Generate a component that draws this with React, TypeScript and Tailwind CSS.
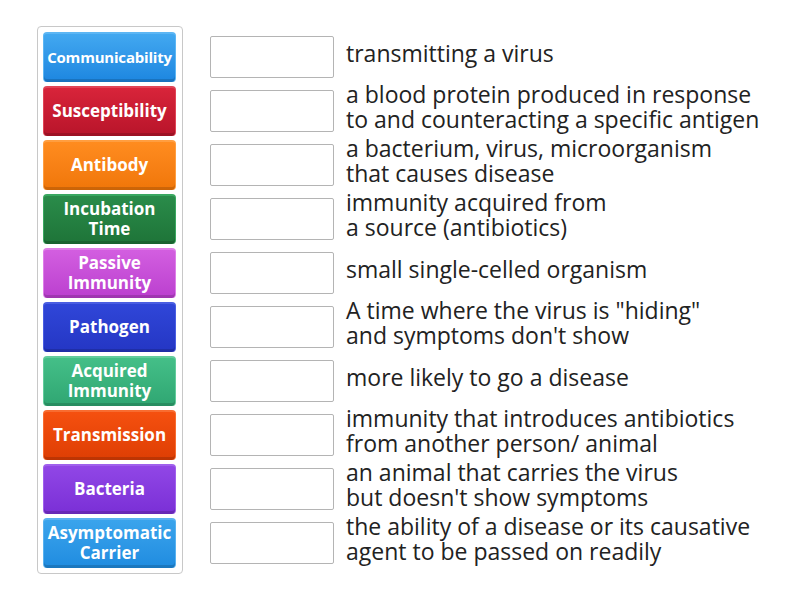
import React from "react";

const tiles: { label: string[]; cls: string }[] = [
  { label: ["Communicability"], cls: "from-[#42a8f0] to-[#1c86e0] border-[#5cb6f4] text-[15px] tracking-[-0.2px]" },
  { label: ["Susceptibility"], cls: "from-[#d8243a] to-[#b8142a] border-[#e04456] text-[17px]" },
  { label: ["Antibody"], cls: "from-[#ff8c1f] to-[#f07608] border-[#ff9e40] text-[17px]" },
  { label: ["Incubation", "Time"], cls: "from-[#2a8c4a] to-[#1e7438] border-[#3aa860] text-[17px]" },
  { label: ["Passive", "Immunity"], cls: "from-[#d35ee0] to-[#bb3fcf] border-[#de7ee8] text-[17px]" },
  { label: ["Pathogen"], cls: "from-[#3046d8] to-[#2436c4] border-[#4a5ee2] text-[17px]" },
  { label: ["Acquired", "Immunity"], cls: "from-[#44bf88] to-[#2fa672] border-[#62cc9c] text-[17px]" },
  { label: ["Transmission"], cls: "from-[#f5500f] to-[#de3e04] border-[#f86c30] text-[17px]" },
  { label: ["Bacteria"], cls: "from-[#9146e6] to-[#7a2fd6] border-[#a060ec] text-[17px]" },
  { label: ["Asymptomatic", "Carrier"], cls: "from-[#3aa4ec] to-[#1f8ce0] border-[#58b2f0] text-[17px]" },
];

const answers: string[][] = [
  ["transmitting a virus"],
  ["a blood protein produced in response", "to and counteracting a specific antigen"],
  ["a bacterium, virus, microorganism", "that causes disease"],
  ["immunity acquired from", "a source (antibiotics)"],
  ["small single-celled organism"],
  ['A time where the virus is "hiding"', "and symptoms don't show"],
  ["more likely to go a disease"],
  ["immunity that introduces antibiotics", "from another person/ animal"],
  ["an animal that carries the virus", "but doesn't show symptoms"],
  ["the ability of a disease or its causative", "agent to be passed on readily"],
];

export default function App() {
  return (
    <div
      className="w-[800px] h-[600px] bg-white relative"
      style={{ fontFamily: '"Open Sans", "Noto Sans", sans-serif' }}
    >
      <div className="flex pt-[26px] pl-[37px]">
        <div className="w-[146px] h-[548px] border border-[#c8c8c8] rounded-[4px] pl-[5px] pt-[5px] flex flex-col gap-[4px]">
          {tiles.map((t, i) => (
            <div
              key={i}
              className={`w-[133px] h-[50px] rounded-[4px] bg-linear-to-b border-t-2 border-x border-b-0 shadow-[inset_0_-3px_0_rgba(0,0,0,0.15)] flex flex-col items-center justify-center pb-[3px] text-white font-bold leading-[20px] whitespace-nowrap ${t.cls}`}
            >
              {t.label.map((l, j) => (
                <span key={j}>{l}</span>
              ))}
            </div>
          ))}
        </div>
        <div className="flex flex-col gap-[4px] pt-[6px] pl-[27px]">
          {answers.map((a, i) => (
            <div key={i} className="h-[50px] flex items-center">
              <div className="w-[124px] h-[42px] border border-[#b4b4b4] rounded-[2px] bg-white shrink-0" />
              <div className="ml-[12px] text-[23px] leading-[25px] text-[#222] -mt-[8px] whitespace-nowrap">
                {a.map((l, j) => (
                  <div key={j}>{l}</div>
                ))}
              </div>
            </div>
          ))}
        </div>
      </div>
    </div>
  );
}
